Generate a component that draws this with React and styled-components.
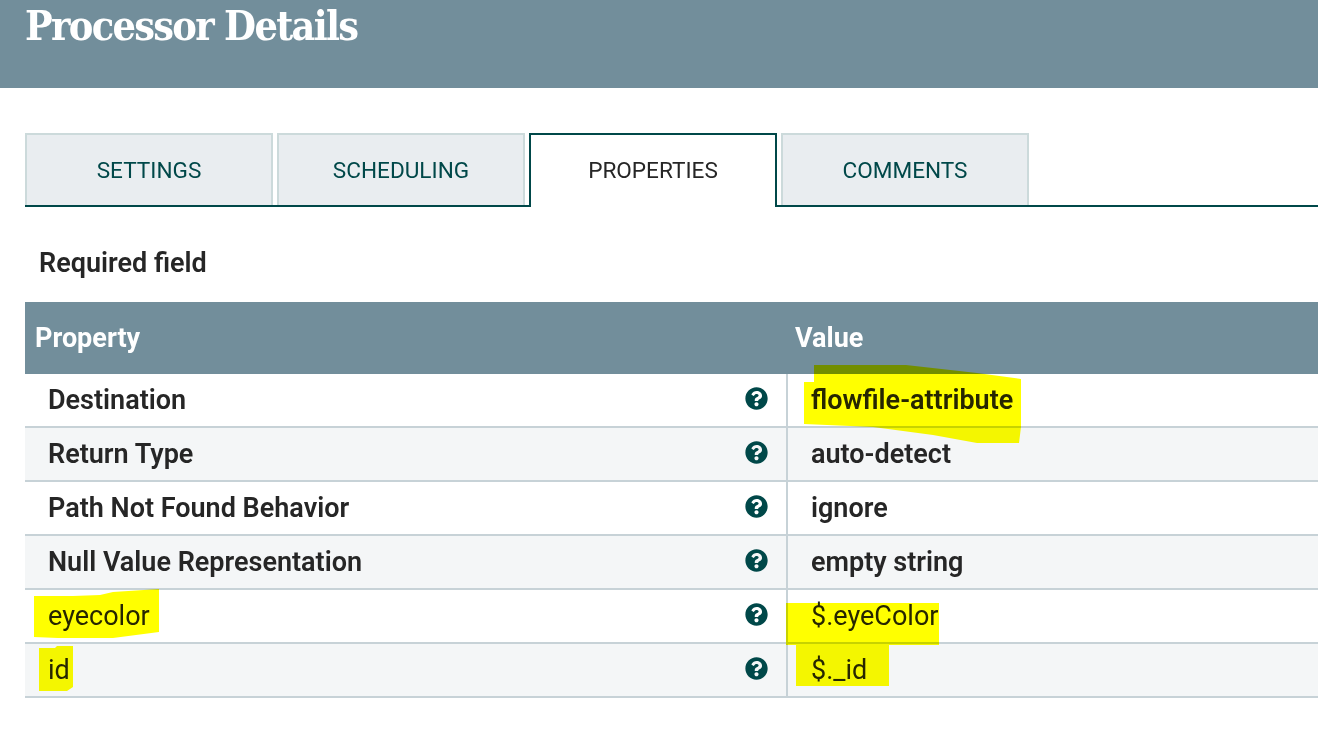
import React from "react";
import styled, { createGlobalStyle } from "styled-components";
import { FaQuestionCircle } from "react-icons/fa";

const GlobalStyle = createGlobalStyle`
  html, body {
    margin: 0;
    background: #fff;
    overflow: hidden;
  }
  body {
    font-family: Roboto, "Liberation Sans", sans-serif;
  }
`;

const Page = styled.div`
  position: relative;
  width: 1318px;
  height: 738px;
  overflow: hidden;
  background: #fff;
`;

const Header = styled.header`
  height: 88px;
  background: #728e9b;
  padding-left: 25px;
  box-sizing: border-box;
`;

const Title = styled.h1`
  margin: 0;
  color: #fff;
  font-family: "DejaVu Serif Condensed", "DejaVu Serif", serif;
  font-stretch: condensed;
  font-size: 41px;
  font-weight: 700;
  line-height: 52px;
  letter-spacing: -1.7px;
`;

const Content = styled.main`
  padding: 45px 0 0 25px;
`;

const Tabs = styled.div`
  display: flex;
  gap: 4px;
  height: 74px;
  box-sizing: border-box;
  border-bottom: 2px solid #004849;
`;

const Tab = styled.div`
  width: 248px;
  height: ${(p) => (p.$active ? "74px" : "72px")};
  box-sizing: border-box;
  display: flex;
  align-items: center;
  justify-content: center;
  padding-bottom: ${(p) => (p.$active ? "2px" : "0")};
  font-size: 22.6px;
  background: ${(p) => (p.$active ? "#fff" : "#e9edf0")};
  color: ${(p) => (p.$active ? "#262626" : "#004849")};
  border: 2px solid ${(p) => (p.$active ? "#004849" : "#ccdadb")};
  border-bottom: 0;
`;

const Required = styled.div`
  margin: 40px 0 0 14px;
  height: 33px;
  font-size: 27px;
  font-weight: 600;
  line-height: 33px;
  color: #262626;
`;

const Table = styled.div`
  margin-top: 22px;
`;

const HeadRow = styled.div`
  display: grid;
  grid-template-columns: 760px 1fr;
  height: 72px;
  background: #728e9b;
  color: #fff;
  font-size: 27px;
  font-weight: 700;
  line-height: 73px;
`;

const HeadCell = styled.div`
  padding-left: 10px;
`;

const Row = styled.div`
  display: grid;
  grid-template-columns: 763px 1fr;
  height: 54px;
  box-sizing: border-box;
  background: ${(p) => (p.$odd ? "#f4f6f7" : "#fff")};
  border-bottom: 2px solid #c7d2d7;
  font-size: 27px;
  line-height: 53px;
  color: #262626;
  font-weight: ${(p) => (p.$dynamic ? 400 : 600)};
`;

const NameCell = styled.div`
  display: flex;
  align-items: center;
  justify-content: space-between;
  padding: 0 18px 0 23px;
  border-right: 2px solid #c7d2d7;
`;

const HelpIcon = styled(FaQuestionCircle)`
  width: 23px;
  height: 23px;
  margin-top: -4px;
  color: #004849;
`;

const ValueCell = styled.div`
  padding: 0 0 0 23px;
`;

const Marker = styled.svg`
  position: absolute;
  top: 0;
  left: 0;
  width: 1318px;
  height: 738px;
  pointer-events: none;
  mix-blend-mode: multiply;
`;

const tabs = ["SETTINGS", "SCHEDULING", "PROPERTIES", "COMMENTS"];

const rows = [
  { name: "Destination", value: "flowfile-attribute" },
  { name: "Return Type", value: "auto-detect" },
  { name: "Path Not Found Behavior", value: "ignore" },
  { name: "Null Value Representation", value: "empty string" },
  { name: "eyecolor", value: "$.eyeColor", dynamic: true },
  { name: "id", value: "$._id", dynamic: true },
];

// highlighter strokes drawn over the screenshot
const strokes = [
  "814,365 906,365 977,373 1021,379 1021,427 1019,443 977,443 933,435 873,427 804,424 804,382 814,382",
  "34,596 73,596 100,595 113,592 159,589 159,632 113,638 58,638 34,637",
  "39,648 55,648 57,646 73,646 73,687 67,691 39,691",
  "786,603 939,603 939,645 786,645",
  "796,645 889,645 889,686 796,686",
];

export default function App() {
  return (
    <Page>
      <GlobalStyle />
      <Header>
        <Title>Processor Details</Title>
      </Header>
      <Content>
        <Tabs>
          {tabs.map((t) => (
            <Tab key={t} $active={t === "PROPERTIES"}>
              {t}
            </Tab>
          ))}
        </Tabs>
        <Required>Required field</Required>
        <Table>
          <HeadRow>
            <HeadCell>Property</HeadCell>
            <HeadCell>Value</HeadCell>
          </HeadRow>
          {rows.map((r, i) => (
            <Row key={r.name} $odd={i % 2 === 1} $dynamic={r.dynamic}>
              <NameCell>
                {r.name}
                <HelpIcon />
              </NameCell>
              <ValueCell>{r.value}</ValueCell>
            </Row>
          ))}
        </Table>
      </Content>
      <Marker viewBox="0 0 1318 738">
        {strokes.map((s) => (
          <polygon key={s} points={s} fill="#ffff00" />
        ))}
      </Marker>
    </Page>
  );
}
